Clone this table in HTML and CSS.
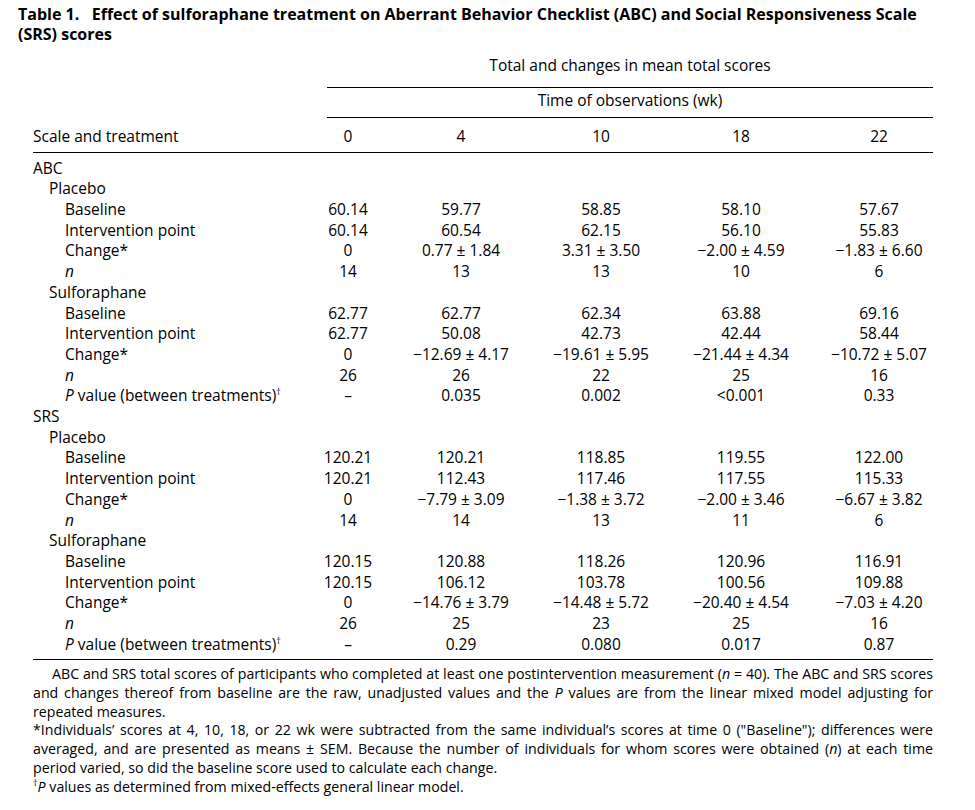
FILE: index.html
```html
<!DOCTYPE html>
<html>
<head>
<meta charset="utf-8">
<link rel="stylesheet" href="styles.css">
</head>
<body>
<div class="page">
  <h1 class="title">Table 1.&nbsp;&nbsp;&nbsp;Effect of sulforaphane treatment on Aberrant Behavior Checklist (ABC) and Social Responsiveness Scale (SRS) scores</h1>
  <div class="table">
    <div class="span-head h1">Total and changes in mean total scores</div>
    <div class="span-head h2">Time of observations (wk)</div>
    <div class="row head">
      <div class="lab">Scale and treatment</div>
      <div class="c">0</div><div class="c">4</div><div class="c">10</div><div class="c">18</div><div class="c">22</div>
    </div>
    <div class="body">
      <div class="row"><div class="lab l0">ABC</div></div>
      <div class="row"><div class="lab l1">Placebo</div></div>
      <div class="row"><div class="lab l2">Baseline</div><div class="c">60.14</div><div class="c">59.77</div><div class="c">58.85</div><div class="c">58.10</div><div class="c">57.67</div></div>
      <div class="row"><div class="lab l2">Intervention point</div><div class="c">60.14</div><div class="c">60.54</div><div class="c">62.15</div><div class="c">56.10</div><div class="c">55.83</div></div>
      <div class="row"><div class="lab l2">Change*</div><div class="c">0</div><div class="c">0.77 ± 1.84</div><div class="c">3.31 ± 3.50</div><div class="c">−2.00 ± 4.59</div><div class="c">−1.83 ± 6.60</div></div>
      <div class="row"><div class="lab l2"><i>n</i></div><div class="c">14</div><div class="c">13</div><div class="c">13</div><div class="c">10</div><div class="c">6</div></div>
      <div class="row"><div class="lab l1">Sulforaphane</div></div>
      <div class="row"><div class="lab l2">Baseline</div><div class="c">62.77</div><div class="c">62.77</div><div class="c">62.34</div><div class="c">63.88</div><div class="c">69.16</div></div>
      <div class="row"><div class="lab l2">Intervention point</div><div class="c">62.77</div><div class="c">50.08</div><div class="c">42.73</div><div class="c">42.44</div><div class="c">58.44</div></div>
      <div class="row"><div class="lab l2">Change*</div><div class="c">0</div><div class="c">−12.69 ± 4.17</div><div class="c">−19.61 ± 5.95</div><div class="c">−21.44 ± 4.34</div><div class="c">−10.72 ± 5.07</div></div>
      <div class="row"><div class="lab l2"><i>n</i></div><div class="c">26</div><div class="c">26</div><div class="c">22</div><div class="c">25</div><div class="c">16</div></div>
      <div class="row"><div class="lab l2"><i>P</i> value (between treatments)<sup>†</sup></div><div class="c">–</div><div class="c">0.035</div><div class="c">0.002</div><div class="c">&lt;0.001</div><div class="c">0.33</div></div>
      <div class="row"><div class="lab l0">SRS</div></div>
      <div class="row"><div class="lab l1">Placebo</div></div>
      <div class="row"><div class="lab l2">Baseline</div><div class="c">120.21</div><div class="c">120.21</div><div class="c">118.85</div><div class="c">119.55</div><div class="c">122.00</div></div>
      <div class="row"><div class="lab l2">Intervention point</div><div class="c">120.21</div><div class="c">112.43</div><div class="c">117.46</div><div class="c">117.55</div><div class="c">115.33</div></div>
      <div class="row"><div class="lab l2">Change*</div><div class="c">0</div><div class="c">−7.79 ± 3.09</div><div class="c">−1.38 ± 3.72</div><div class="c">−2.00 ± 3.46</div><div class="c">−6.67 ± 3.82</div></div>
      <div class="row"><div class="lab l2"><i>n</i></div><div class="c">14</div><div class="c">14</div><div class="c">13</div><div class="c">11</div><div class="c">6</div></div>
      <div class="row"><div class="lab l1">Sulforaphane</div></div>
      <div class="row"><div class="lab l2">Baseline</div><div class="c">120.15</div><div class="c">120.88</div><div class="c">118.26</div><div class="c">120.96</div><div class="c">116.91</div></div>
      <div class="row"><div class="lab l2">Intervention point</div><div class="c">120.15</div><div class="c">106.12</div><div class="c">103.78</div><div class="c">100.56</div><div class="c">109.88</div></div>
      <div class="row"><div class="lab l2">Change*</div><div class="c">0</div><div class="c">−14.76 ± 3.79</div><div class="c">−14.48 ± 5.72</div><div class="c">−20.40 ± 4.54</div><div class="c">−7.03 ± 4.20</div></div>
      <div class="row"><div class="lab l2"><i>n</i></div><div class="c">26</div><div class="c">25</div><div class="c">23</div><div class="c">25</div><div class="c">16</div></div>
      <div class="row"><div class="lab l2"><i>P</i> value (between treatments)<sup>†</sup></div><div class="c">–</div><div class="c">0.29</div><div class="c">0.080</div><div class="c">0.017</div><div class="c">0.87</div></div>
    </div>
    <div class="notes">
      <p class="first">ABC and SRS total scores of participants who completed at least one postintervention measurement (<i>n</i> = 40). The ABC and SRS scores and changes thereof from baseline are the raw, unadjusted values and the <i>P</i> values are from the linear mixed model adjusting for repeated measures.</p>
      <p>*Individuals’ scores at 4, 10, 18, or 22 wk were subtracted from the same individual’s scores at time 0 ("Baseline"); differences were averaged, and are presented as means ± SEM. Because the number of individuals for whom scores were obtained (<i>n</i>) at each time period varied, so did the baseline score used to calculate each change.</p>
      <p><sup>†</sup><i>P</i> values as determined from mixed-effects general linear model.</p>
    </div>
  </div>
</div>
</body>
</html>
```

FILE: styles.css
```css
html, body {
  margin: 0;
  padding: 0;
  background: #fff;
}
body {
  font-family: "Open Sans", "Noto Sans", sans-serif;
  color: #000;
  width: 975px;
  height: 810px;
  overflow: hidden;
}
.page {
  padding-top: 4px;
}
.title {
  margin: 0 0 0 18px;
  width: 912px;
  font-size: 16px;
  line-height: 20px;
  font-weight: 700;
}
.table {
  margin-left: 33px;
  width: 900px;
  font-size: 15.5px;
}
.span-head {
  margin-left: 294px;
  text-align: center;
  line-height: 20px;
  border-bottom: 1px solid #000;
}
.h1 {
  margin-top: 11px;
  padding-bottom: 12px;
}
.h2 {
  padding-top: 2px;
  padding-bottom: 7px;
}
.row {
  display: grid;
  grid-template-columns: 286px 58px 168px 112px 168px 108px;
  line-height: 20.7px;
  white-space: nowrap;
}
.row.head {
  line-height: 20px;
  padding-top: 8px;
  padding-bottom: 6px;
  border-bottom: 1px solid #000;
}
.c {
  justify-self: center;
}
.l0 { padding-left: 0; }
.l1 { padding-left: 16px; }
.l2 { padding-left: 32px; }
sup {
  font-size: 9px;
  line-height: 0;
  vertical-align: 6px;
}
.body {
  padding-top: 4.6px;
  padding-bottom: 5px;
  border-bottom: 1px solid #000;
}
.notes {
  margin-top: 5px;
  font-size: 14.2px;
  line-height: 18.67px;
  text-align: justify;
}
.notes p {
  margin: 0;
}
.notes p.first {
  text-indent: 19px;
}
```
